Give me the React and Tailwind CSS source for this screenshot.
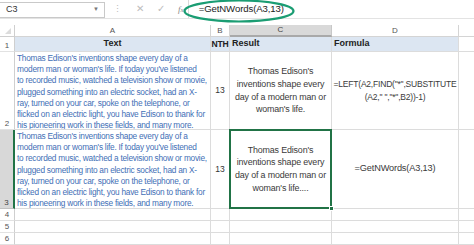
import React from 'react';

const font = { fontFamily: '"Liberation Sans", Arial, sans-serif' };

const edisonLines = [
  "Thomas Edison's inventions shape every day of a",
  "modern man or woman's life. If today you've listened",
  "to recorded music, watched a television show or movie,",
  "plugged something into an electric socket, had an X-",
  "ray, turned on your car, spoke on the telephone, or",
  "flicked on an electric light, you have Edison to thank for",
  "his pioneering work in these fields, and many more.",
];

const EdisonText = () => (
  <div className="pl-[2px] pt-[1px] text-[8.3px] leading-[11.2px] tracking-[-0.25px] text-[#3f6fb6] whitespace-nowrap overflow-hidden">
    {edisonLines.map((l) => (
      <div key={l}>{l}</div>
    ))}
  </div>
);

const ResultText = ({ last }) => (
  <div className="h-full flex flex-col items-center justify-center text-[8.9px] leading-[12.7px] tracking-[-0.15px] text-[#3a3a3a] whitespace-nowrap">
    <div>Thomas Edison's</div>
    <div>inventions shape every</div>
    <div>day of a modern man or</div>
    <div>{last}</div>
  </div>
);

const RowNum = ({ n, selected }) => (
  <div
    className={
      'flex items-end justify-center border-b pb-[1px] text-[8px] leading-none ' +
      (selected
        ? 'bg-[#d8d8d8] border-b-[#c0c0c0] border-r-2 border-r-[#217346] text-[#444]'
        : 'bg-white border-b-[#e2e2e2] border-r border-r-[#cfcfcf] text-[#555]')
    }
  >
    {n}
  </div>
);

const Cell = ({ className = '', children }) => (
  <div className={'border-r border-b border-[#dcdcdc] ' + className}>{children}</div>
);

export default function App() {
  return (
    <div className="w-[474px] h-[245px] bg-white overflow-hidden relative" style={font}>
      {/* formula bar */}
      <div className="h-[25px] flex flex-col">
        <div className="h-[19px] flex items-center border-b border-[#e3e3e3]">
          <div className="w-[105px] h-[16px] mt-[1px] border border-l-0 border-[#c9c9c9] flex items-center justify-between pl-[6px] pr-[5px]">
            <span className="text-[9px] text-[#333]">C3</span>
            <span className="text-[6px] text-[#777]">▼</span>
          </div>
          <span className="ml-[8px] text-[9px] text-[#bbb] leading-none">⋮</span>
          <span className="ml-[14px] text-[10px] text-[#bdbdbd] leading-none">✕</span>
          <span className="ml-[13px] text-[10px] text-[#bdbdbd] leading-none">✓</span>
          <span className="ml-[13px] text-[9px] italic text-[#888] leading-none" style={{ fontFamily: '"Liberation Serif", serif' }}>
            f<span className="text-[7px]">x</span>
          </span>
          <div className="ml-[4px] h-full flex-1 border-l border-[#dadada] flex items-center pl-[10px]">
            <span className="text-[9.6px] text-[#222] tracking-[-0.1px]">=GetNWords(A3,13)</span>
          </div>
        </div>
        <div className="flex-1 bg-white"></div>
      </div>

      {/* green annotation ellipse */}
      <svg className="absolute left-[181px] top-[-1px]" width="116" height="25" viewBox="0 0 116 25">
        <ellipse cx="58" cy="12" rx="54.5" ry="10.5" fill="none" stroke="#1b9d73" strokeWidth="2.2" />
      </svg>

      {/* sheet */}
      <div className="grid grid-cols-[15px_196px_19px_102px_127px_1fr] grid-rows-[12px_15px_78px_79px_12px_12px_12px] text-[#555]">
        {/* column headers */}
        <div className="border-r border-b border-[#cfcfcf] bg-white relative">
          <div className="absolute right-[3px] bottom-[2px] w-0 h-0 border-l-[6px] border-l-transparent border-b-[6px] border-b-[#dcdcdc]"></div>
        </div>
        <div className="border-r border-b border-[#d4d4d4] flex items-center justify-center text-[8px]">A</div>
        <div className="border-r border-b border-[#d4d4d4] flex items-center justify-center text-[8px]">B</div>
        <div className="border-r border-b-2 border-r-[#c8c8c8] border-b-[#a9a9a9] bg-[#d9d9d9] flex items-center justify-center text-[8px] text-[#444]">C</div>
        <div className="border-r border-b border-[#d4d4d4] flex items-center justify-center text-[8px]">D</div>
        <div className="border-b border-[#d4d4d4]"></div>

        {/* row 1 */}
        <RowNum n="1" />
        <Cell className="bg-[#dce6f2] flex items-center justify-center font-bold text-[9px] text-[#222]">Text</Cell>
        <Cell className="bg-[#dce6f2] flex items-center justify-center font-bold text-[8.6px] tracking-[-0.3px] text-[#222]">NTH</Cell>
        <Cell className="bg-[#dce6f2] flex items-center pl-[2px] font-bold text-[9px] text-[#222]">Result</Cell>
        <Cell className="bg-[#dce6f2] flex items-center pl-[2px] font-bold text-[9px] text-[#222]">Formula</Cell>
        <div className="border-b border-[#dcdcdc]"></div>

        {/* row 2 */}
        <RowNum n="2" />
        <Cell className="overflow-hidden">
          <EdisonText />
        </Cell>
        <Cell className="flex items-center justify-center text-[8.5px] text-[#333]">13</Cell>
        <Cell>
          <ResultText last="woman's life." />
        </Cell>
        <Cell className="flex flex-col items-center justify-center text-[8.5px] leading-[12.7px] tracking-[-0.2px] text-[#3a3a3a] whitespace-nowrap overflow-hidden">
          <div>=LEFT(A2,FIND("*",SUBSTITUTE</div>
          <div>(A2," ","*",B2))-1)</div>
        </Cell>
        <div className="border-b border-[#dcdcdc]"></div>

        {/* row 3 */}
        <RowNum n="3" selected />
        <Cell className="overflow-hidden">
          <EdisonText />
        </Cell>
        <Cell className="flex items-center justify-center text-[8.5px] text-[#333]">13</Cell>
        <div className="relative border-r border-b border-[#dcdcdc]">
          <ResultText last="woman's life...." />
          <div className="absolute inset-[-1px] border-2 border-[#217346] pointer-events-none"></div>
          <div className="absolute right-[-3px] bottom-[-3px] w-[5px] h-[5px] bg-[#217346] border border-white"></div>
        </div>
        <Cell className="flex items-center justify-center text-[9.2px] tracking-[-0.15px] text-[#3a3a3a]">=GetNWords(A3,13)</Cell>
        <div className="border-b border-[#dcdcdc]"></div>

        {/* rows 4-6 */}
        {['4', '5', '6'].map((n) => (
          <React.Fragment key={n}>
            <RowNum n={n} />
            <Cell />
            <Cell />
            <Cell />
            <Cell />
            <div className="border-b border-[#dcdcdc]"></div>
          </React.Fragment>
        ))}
      </div>
    </div>
  );
}
